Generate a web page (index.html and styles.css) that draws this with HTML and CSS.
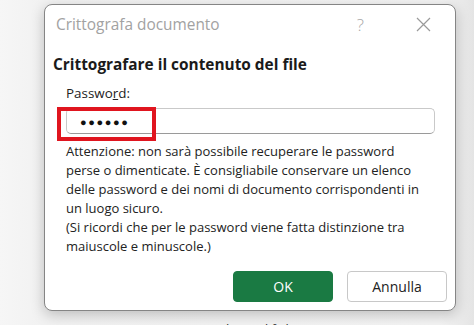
FILE: index.html
```html
<!DOCTYPE html>
<html>
<head>
<meta charset="utf-8">
<title>Crittografa documento</title>
<link rel="stylesheet" href="styles.css">
</head>
<body>
<div class="page">
	<div class="dialog">
		<div class="titlebar">
			<span class="title">Crittografa documento</span>
			<span class="help">?</span>
			<svg class="close" width="15" height="15" viewBox="0 0 15 15"><path d="M1 1L14 14M14 1L1 14" stroke="#9a9a9a" stroke-width="1.2" fill="none"/></svg>
		</div>
		<h1 class="heading">Crittografare il contenuto del file</h1>
		<div class="body">
			<label class="label">Passwo<u>r</u>d:</label>
			<div class="field">
				<div class="input"><span class="dots">&#9679;&#9679;&#9679;&#9679;&#9679;&#9679;</span></div>
				<div class="mark"></div>
			</div>
			<p class="note">Attenzione: non sarà possibile recuperare le password perse o dimenticate. È consigliabile conservare un elenco delle password e dei nomi di documento corrispondenti in un luogo sicuro.<br>(Si ricordi che per le password viene fatta distinzione tra maiuscole e minuscole.)</p>
		</div>
		<div class="buttons">
			<button class="btn ok">OK</button>
			<button class="btn cancel">Annulla</button>
		</div>
	</div>
	<div class="behind">Tu non ricevi un avviso se lo modifichi</div>
</div>
</body>
</html>
```
FILE: styles.css
```css
*{margin:0;padding:0;box-sizing:border-box;}
body{background:#f4f4f4;overflow:hidden;font-family:"Open Sans","Noto Sans",sans-serif;color:#222;}
.page{height:325px;padding:4px 0 0 44px;background:linear-gradient(to right,#f6f6f6 0,#f2f2f2 40px,#f4f4f4 440px,#e4e4e4 474px);}
.dialog{width:412px;height:307px;background:#fff;border:1px solid #858585;border-radius:8px;box-shadow:0 4px 14px rgba(0,0,0,.22);display:flex;flex-direction:column;}
.titlebar{height:39px;display:flex;align-items:center;padding:0 24px 0 11px;}
.title{flex:1;font-size:15.4px;color:#a2a2a2;}
.help{font-size:17px;font-weight:300;color:#a8a8a8;margin-right:52px;}
.heading{font-size:15.4px;font-weight:700;padding:10px 0 0 8px;color:#1a1a1a;line-height:22px;}
.body{padding:8px 0 0 21px;}
.label{display:block;font-size:13.4px;line-height:18px;}
.field{position:relative;margin-top:6px;width:369px;}
.input{height:26px;border:1px solid #c9c9c9;border-bottom-color:#9a9a9a;border-radius:5px;display:flex;align-items:center;padding-left:13px;}
.dots{font-size:11px;letter-spacing:1.6px;color:#111;}
.mark{position:absolute;left:-9px;top:-1px;width:99px;height:34px;border:4px solid #e0151f;}
.note{font-size:13px;line-height:19px;margin-top:8px;width:363px;color:#222;}
.buttons{display:flex;justify-content:flex-end;gap:14px;padding:15px 8px 0 0;}
.btn{width:100px;height:31px;border-radius:4px;font-family:inherit;font-size:14px;}
.ok{background:#1a7a43;color:#fff;border:1px solid #1a7a43;}
.cancel{background:#fff;color:#222;border:1px solid #c8c8c8;}
.behind{margin:9px 0 0 24px;font-size:13px;color:#333;}
```
